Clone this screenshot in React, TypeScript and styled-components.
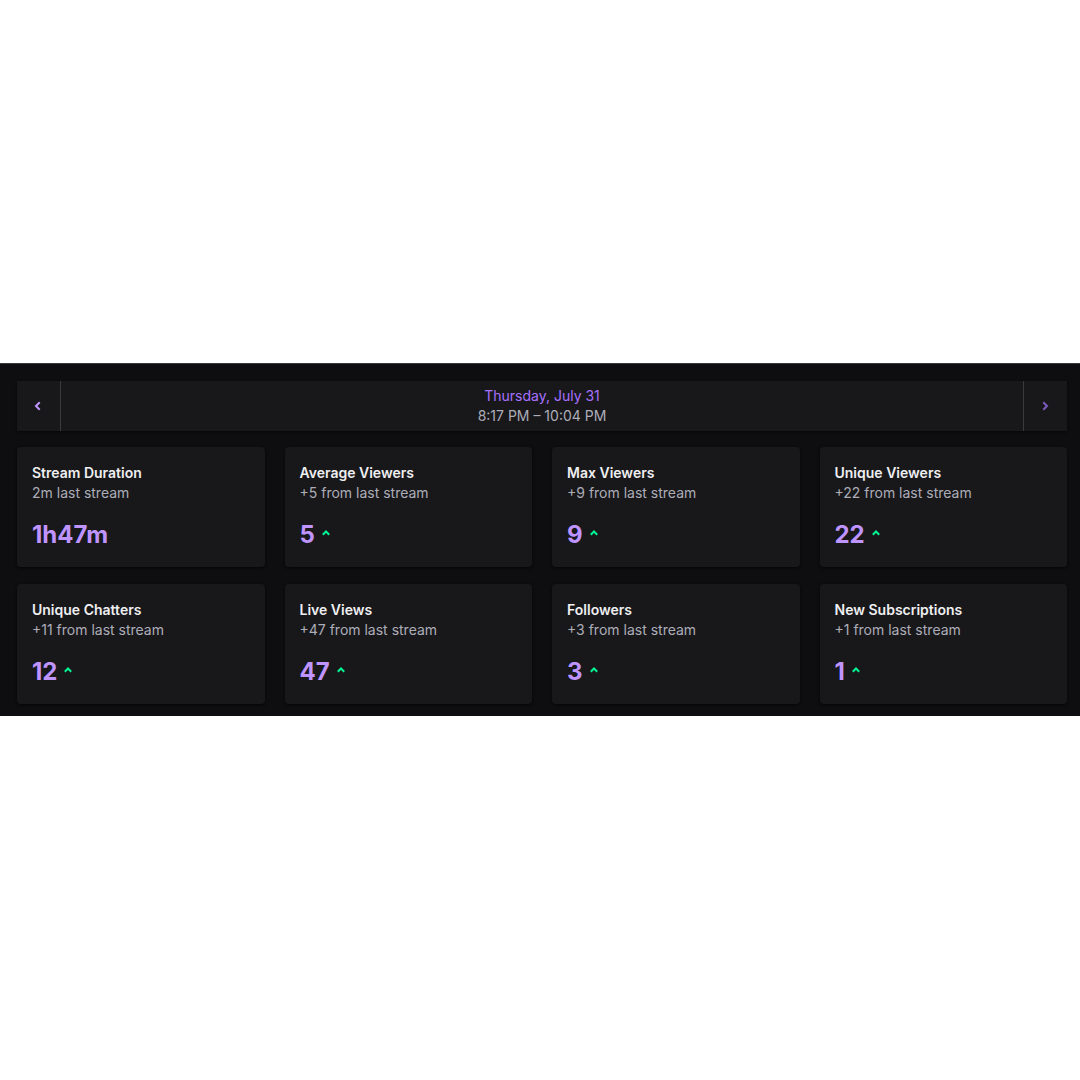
import React from "react";
import styled, { createGlobalStyle } from "styled-components";

const GlobalStyle = createGlobalStyle`
  html, body {
    margin: 0;
    padding: 0;
    background: #ffffff;
  }
  body {
    font-family: Inter, "Noto Sans", "Liberation Sans", sans-serif;
    -webkit-font-smoothing: antialiased;
  }
`;

const Page = styled.div`
  min-height: 1080px;
  box-sizing: border-box;
  padding-bottom: 1px;
  display: flex;
  flex-direction: column;
  justify-content: center;
`;

const Panel = styled.section`
  background: #0e0e10;
  border-top: 1px solid #3a3a3d;
  padding: 17px 13px 12px 17px;
  display: flex;
  flex-direction: column;
  gap: 16px;
`;

const NavBar = styled.div`
  display: flex;
  align-items: stretch;
  height: 50px;
  background: #18181b;
  box-shadow: 0 1px 2px rgba(0, 0, 0, 0.6);
`;

const NavButton = styled.button<{ $side: "left" | "right"; $dim?: boolean }>`
  width: 44px;
  flex: 0 0 44px;
  display: flex;
  align-items: center;
  justify-content: center;
  background: transparent;
  border: none;
  padding: 0;
  cursor: pointer;
  color: ${(p) => (p.$dim ? "#7d5bbe" : "#bf94ff")};
  ${(p) => (p.$side === "left" ? "border-right" : "border-left")}: 1px solid #3a3a3d;
`;

const DateBlock = styled.div`
  flex: 1;
  display: flex;
  flex-direction: column;
  align-items: center;
  justify-content: center;
  font-size: 14px;
  line-height: 20px;
`;

const DateLine = styled.div`
  color: #a970ff;
`;

const TimeLine = styled.div`
  color: #adadb8;
`;

const Grid = styled.div`
  display: grid;
  grid-template-columns: repeat(4, 1fr);
  column-gap: 20px;
  row-gap: 17px;
`;

const Card = styled.div`
  background: #18181b;
  border-radius: 4px;
  padding: 16px 15px 17px;
  box-shadow: 0 1px 3px rgba(0, 0, 0, 0.7);
  display: flex;
  flex-direction: column;
`;

const Title = styled.div`
  color: #efeff1;
  font-size: 14px;
  font-weight: 600;
  line-height: 20px;
`;

const Sub = styled.div`
  color: #adadb8;
  font-size: 14px;
  line-height: 20px;
`;

const ValueRow = styled.div`
  margin-top: 17px;
  display: flex;
  align-items: center;
  gap: 6px;
  height: 30px;
`;

const Value = styled.span`
  color: #bf94ff;
  font-size: 24px;
  font-weight: 700;
  line-height: 30px;
`;

const Chevron = ({ dir, size = 10 }: { dir: "left" | "right" | "up"; size?: number }) => {
  const pts =
    dir === "left" ? "5,2 2,5 5,8" : dir === "right" ? "3,2 6,5 3,8" : "2.5,6 5,3.5 7.5,6";
  return (
    <svg width={size} height={size} viewBox="0 0 10 10" fill="none">
      <polyline
        points={pts}
        stroke="currentColor"
        strokeWidth="2"
        strokeLinecap="square"
        strokeLinejoin="miter"
      />
    </svg>
  );
};

const UpMark = styled.span`
  color: #00f593;
  display: flex;
  margin-top: -4px;
`;

type Stat = { title: string; sub: string; value: string; up?: boolean };

const stats: Stat[] = [
  { title: "Stream Duration", sub: "2m last stream", value: "1h47m" },
  { title: "Average Viewers", sub: "+5 from last stream", value: "5", up: true },
  { title: "Max Viewers", sub: "+9 from last stream", value: "9", up: true },
  { title: "Unique Viewers", sub: "+22 from last stream", value: "22", up: true },
  { title: "Unique Chatters", sub: "+11 from last stream", value: "12", up: true },
  { title: "Live Views", sub: "+47 from last stream", value: "47", up: true },
  { title: "Followers", sub: "+3 from last stream", value: "3", up: true },
  { title: "New Subscriptions", sub: "+1 from last stream", value: "1", up: true },
];

export default function App() {
  return (
    <>
      <GlobalStyle />
      <Page>
        <Panel>
          <NavBar>
            <NavButton $side="left">
              <Chevron dir="left" />
            </NavButton>
            <DateBlock>
              <DateLine>Thursday, July 31</DateLine>
              <TimeLine>8:17 PM – 10:04 PM</TimeLine>
            </DateBlock>
            <NavButton $side="right" $dim>
              <Chevron dir="right" />
            </NavButton>
          </NavBar>
          <Grid>
            {stats.map((s) => (
              <Card key={s.title}>
                <Title>{s.title}</Title>
                <Sub>{s.sub}</Sub>
                <ValueRow>
                  <Value>{s.value}</Value>
                  {s.up && (
                    <UpMark>
                      <Chevron dir="up" />
                    </UpMark>
                  )}
                </ValueRow>
              </Card>
            ))}
          </Grid>
        </Panel>
      </Page>
    </>
  );
}
